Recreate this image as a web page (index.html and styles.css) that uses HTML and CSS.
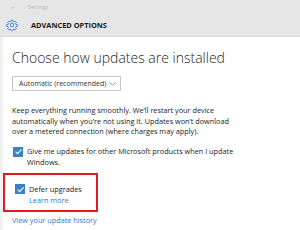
FILE: index.html
```html
<!DOCTYPE html>
<html>
<head>
<meta charset="utf-8">
<link rel="stylesheet" href="styles.css">
</head>
<body>
<div class="app">
  <div class="titlebar">
    <span class="back">&#8592;</span>
    <span class="apptitle">Settings</span>
  </div>
  <div class="pagehead">
    <svg class="gear" width="12" height="12" viewBox="0 0 24 24" fill="none" stroke="#3a82d6" stroke-width="1.8">
      <path d="M10.3 2.5h3.4l.5 2.6 1.9.8 2.2-1.5 2.4 2.4-1.5 2.2.8 1.9 2.6.5v3.4l-2.6.5-.8 1.9 1.5 2.2-2.4 2.4-2.2-1.5-1.9.8-.5 2.6h-3.4l-.5-2.6-1.9-.8-2.2 1.5-2.4-2.4 1.5-2.2-.8-1.9-2.6-.5v-3.4l2.6-.5.8-1.9-1.5-2.2 2.4-2.4 2.2 1.5 1.9-.8z"/>
      <circle cx="12" cy="12" r="3.6"/>
    </svg>
    <span class="headtext">ADVANCED OPTIONS</span>
  </div>
  <div class="content">
    <h1 class="title">Choose how updates are installed</h1>
    <div class="select">
      <span>Automatic (recommended)</span>
      <svg class="chev" width="7" height="4" viewBox="0 0 7 4" fill="none" stroke="#888" stroke-width="0.8"><path d="M0.3 0.3L3.5 3.4L6.7 0.3"/></svg>
    </div>
    <p class="desc">Keep everything running smoothly. We’ll restart your device automatically when you’re not using it. Updates won’t download over a metered connection (where charges may apply).</p>
    <div class="check first">
      <span class="box"><svg width="9" height="9" viewBox="0 0 10 10" fill="none" stroke="#fff" stroke-width="1.2"><path d="M1.8 5.2L4 7.4L8.4 2.6"/></svg></span>
      <span class="label">Give me updates for other Microsoft products when I update Windows.</span>
    </div>
    <div class="highlight">
      <div class="check">
        <span class="box"><svg width="9" height="9" viewBox="0 0 10 10" fill="none" stroke="#fff" stroke-width="1.2"><path d="M1.8 5.2L4 7.4L8.4 2.6"/></svg></span>
        <span class="label">Defer upgrades<br><a class="link">Learn more</a></span>
      </div>
    </div>
    <a class="link history">View your update history</a>
  </div>
</div>
</body>
</html>
```
FILE: styles.css
```css
html, body {
  margin: 0;
  padding: 0;
  background: #fff;
}
body {
  width: 300px;
  height: 230px;
  overflow: hidden;
  font-family: "Open Sans", "Noto Sans", sans-serif;
  color: #222;
}
.app {
  display: flex;
  flex-direction: column;
  height: 230px;
}
.titlebar {
  flex: none;
  background: #e6e6e6;
  height: 13px;
  display: flex;
  align-items: center;
  padding-left: 10px;
  gap: 11px;
  font-size: 5.5px;
  color: #b9b9b9;
}
.back {
  font-size: 7px;
  color: #b0b0b0;
}
.pagehead {
  flex: none;
  background: #e6e6e6;
  height: 23px;
  display: flex;
  align-items: center;
  padding-left: 6px;
  gap: 13px;
  border-bottom: 1px solid #dadada;
}
.gear {
  display: block;
}
.headtext {
  font-size: 7.4px;
  font-weight: 700;
  color: #1a1a1a;
}
.content {
  flex: 1;
  border-left: 3px solid #f1f1f1;
  padding: 12px 0 0 9px;
}
.title {
  margin: 0;
  font-size: 14px;
  font-weight: 300;
  line-height: 18px;
  color: #262626;
}
.select {
  margin-top: 9px;
  height: 13px;
  border: 1px solid #c8c8c8;
  display: flex;
  align-items: center;
  justify-content: space-between;
  padding: 0 4px 0 6px;
  box-sizing: content-box;
  font-size: 7px;
  color: #333;
  width: 97px;
}
.chev {
  display: block;
}
.desc {
  margin: 14px 0 0 0;
  width: 222px;
  font-size: 7.3px;
  line-height: 10.6px;
  color: #222;
}
.check {
  display: flex;
  align-items: flex-start;
  gap: 4px;
}
.check.first {
  margin-top: 10px;
  width: 240px;
}
.box {
  flex: none;
  width: 10px;
  height: 10px;
  background: #3c80c6;
  display: flex;
  align-items: center;
  justify-content: center;
  margin-left: 1px;
}
.box svg {
  display: block;
}
.label {
  font-size: 7.3px;
  line-height: 11px;
  color: #222;
  margin-top: -0.5px;
}
.highlight {
  margin: 5px 0 0 -9px;
  width: 82px;
  height: 26px;
  border: 2px solid #e01b22;
  padding: 9px 0 0 9px;
  box-sizing: content-box;
}
.link {
  color: #2f7ac2;
  font-size: 7.3px;
}
.history {
  display: block;
  margin-top: 3px;
  line-height: 11px;
}
```
